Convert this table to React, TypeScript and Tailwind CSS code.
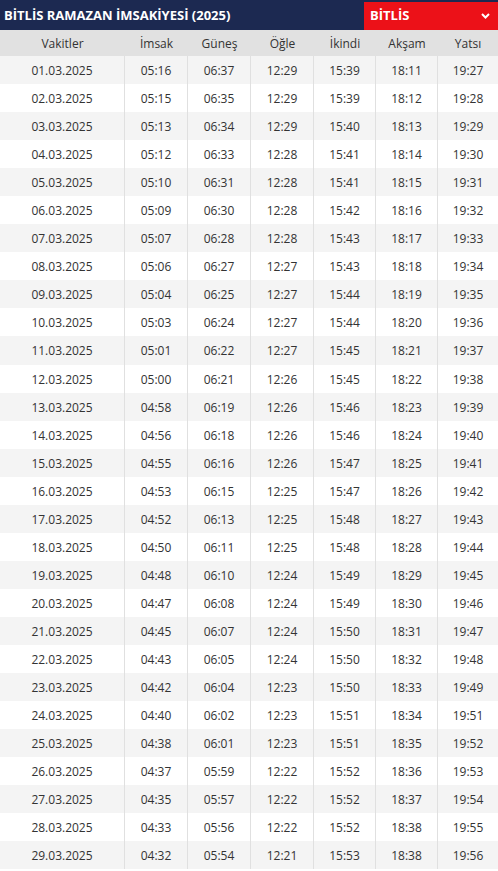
import React from "react";

const ROWS: string[][] = [
  ["01.03.2025", "05:16", "06:37", "12:29", "15:39", "18:11", "19:27"],
  ["02.03.2025", "05:15", "06:35", "12:29", "15:39", "18:12", "19:28"],
  ["03.03.2025", "05:13", "06:34", "12:29", "15:40", "18:13", "19:29"],
  ["04.03.2025", "05:12", "06:33", "12:28", "15:41", "18:14", "19:30"],
  ["05.03.2025", "05:10", "06:31", "12:28", "15:41", "18:15", "19:31"],
  ["06.03.2025", "05:09", "06:30", "12:28", "15:42", "18:16", "19:32"],
  ["07.03.2025", "05:07", "06:28", "12:28", "15:43", "18:17", "19:33"],
  ["08.03.2025", "05:06", "06:27", "12:27", "15:43", "18:18", "19:34"],
  ["09.03.2025", "05:04", "06:25", "12:27", "15:44", "18:19", "19:35"],
  ["10.03.2025", "05:03", "06:24", "12:27", "15:44", "18:20", "19:36"],
  ["11.03.2025", "05:01", "06:22", "12:27", "15:45", "18:21", "19:37"],
  ["12.03.2025", "05:00", "06:21", "12:26", "15:45", "18:22", "19:38"],
  ["13.03.2025", "04:58", "06:19", "12:26", "15:46", "18:23", "19:39"],
  ["14.03.2025", "04:56", "06:18", "12:26", "15:46", "18:24", "19:40"],
  ["15.03.2025", "04:55", "06:16", "12:26", "15:47", "18:25", "19:41"],
  ["16.03.2025", "04:53", "06:15", "12:25", "15:47", "18:26", "19:42"],
  ["17.03.2025", "04:52", "06:13", "12:25", "15:48", "18:27", "19:43"],
  ["18.03.2025", "04:50", "06:11", "12:25", "15:48", "18:28", "19:44"],
  ["19.03.2025", "04:48", "06:10", "12:24", "15:49", "18:29", "19:45"],
  ["20.03.2025", "04:47", "06:08", "12:24", "15:49", "18:30", "19:46"],
  ["21.03.2025", "04:45", "06:07", "12:24", "15:50", "18:31", "19:47"],
  ["22.03.2025", "04:43", "06:05", "12:24", "15:50", "18:32", "19:48"],
  ["23.03.2025", "04:42", "06:04", "12:23", "15:50", "18:33", "19:49"],
  ["24.03.2025", "04:40", "06:02", "12:23", "15:51", "18:34", "19:51"],
  ["25.03.2025", "04:38", "06:01", "12:23", "15:51", "18:35", "19:52"],
  ["26.03.2025", "04:37", "05:59", "12:22", "15:52", "18:36", "19:53"],
  ["27.03.2025", "04:35", "05:57", "12:22", "15:52", "18:37", "19:54"],
  ["28.03.2025", "04:33", "05:56", "12:22", "15:52", "18:38", "19:55"],
  ["29.03.2025", "04:32", "05:54", "12:21", "15:53", "18:38", "19:56"],
];

const HEADERS = ["Vakitler", "İmsak", "Güneş", "Öğle", "İkindi", "Akşam", "Yatsı"];

const COLS = "grid grid-cols-[125px_63px_63px_63px_62px_62px_1fr]";

export default function App() {
  return (
    <div className="w-[498px] bg-white text-[#333] font-['Open_Sans',sans-serif] text-[12px]">
      {/* Title bar */}
      <div className="flex h-[30px] bg-[#1c2951]">
        <h1 className="flex-1 pl-[4px] pt-[6px] text-[13px] font-bold text-white leading-[18px]">
          BİTLİS RAMAZAN İMSAKİYESİ (2025)
        </h1>
        <div className="mt-[2px] flex w-[134px] items-center justify-between bg-[#ec1118] pl-[6px] pr-[8px] text-white">
          <span className="text-[13px] font-bold">BİTLİS</span>
          <svg width="9" height="6" viewBox="0 0 9 6" fill="none">
            <path d="M1 1l3.5 3.5L8 1" stroke="white" strokeWidth="2" />
          </svg>
        </div>
      </div>

      {/* Column headers */}
      <div className={`${COLS} h-[26px] bg-[#e1e1e1] items-center text-center pt-[2px]`}>
        {HEADERS.map((h) => (
          <div key={h}>{h}</div>
        ))}
      </div>

      {/* Rows */}
      {ROWS.map((row, i) => (
        <div
          key={row[0]}
          className={`${COLS} h-[28.05px] text-center ${i % 2 === 0 ? "bg-[#f4f4f4]" : "bg-white"}`}
        >
          {row.map((cell, j) => (
            <div
              key={j}
              className={`flex items-center justify-center pt-[2px] ${j < 6 ? "border-r border-[#e0e0e0]" : ""}`}
            >
              {cell}
            </div>
          ))}
        </div>
      ))}
    </div>
  );
}
